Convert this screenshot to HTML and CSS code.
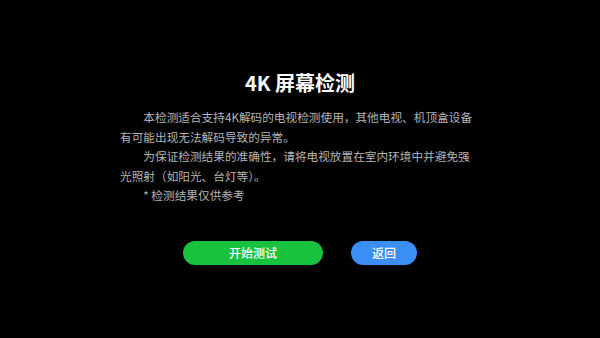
FILE: index.html
```html
<!DOCTYPE html>
<html lang="zh-CN">

<head>
    <meta charset="UTF-8">
    <meta name="viewport" content="width=device-width, initial-scale=1.0">
    <title>4K 屏幕检测</title>
    <link rel="stylesheet" href="styles.css">
</head>

<body>
    <div class="screen">
        <h1 class="title">4K 屏幕检测</h1>
        <div class="notes">
            <p>本检测适合支持4K解码的电视检测使用，其他电视、机顶盒设备有可能出现无法解码导致的异常。</p>
            <p>为保证检测结果的准确性，请将电视放置在室内环境中并避免强光照射（如阳光、台灯等）。</p>
            <p>* 检测结果仅供参考</p>
        </div>
        <div class="actions">
            <button class="btn btn-start">开始测试</button>
            <button class="btn btn-back">返回</button>
        </div>
    </div>
</body>

</html>
```

FILE: styles.css
```css
body {
    margin: 0;
    padding: 0;
    background-color: #000;
    font-family: "Noto Sans CJK SC", "Noto Sans", sans-serif;
}

.screen {
    width: 600px;
    height: 338px;
    padding-top: 71px;
    box-sizing: border-box;
}

.title {
    margin: 0;
    font-size: 20px;
    line-height: 24px;
    font-weight: 700;
    color: #fff;
    text-align: center;
}

.notes {
    width: 360px;
    margin: 12px auto 0;
    font-size: 11.66px;
    line-height: 19.5px;
    color: #b4b4b4;
}

.notes p {
    margin: 0;
    text-indent: 2em;
}

.actions {
    display: flex;
    justify-content: center;
    gap: 28px;
    margin-top: 36px;
}

.btn {
    height: 24px;
    padding: 0;
    border: none;
    border-radius: 12px;
    color: #fff;
    font-family: inherit;
    font-size: 12px;
    font-weight: 500;
    line-height: 24px;
    cursor: pointer;
}

.btn-start {
    width: 140px;
    background-color: #19c23d;
}

.btn-back {
    width: 66px;
    background-color: #3a8ef5;
}
```
